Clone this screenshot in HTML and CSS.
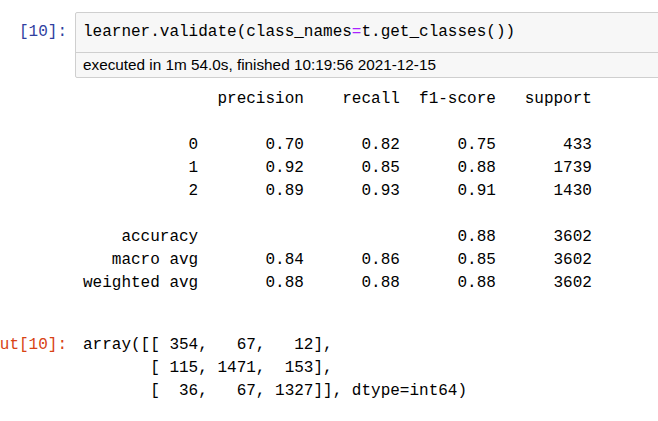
FILE: index.html
```html
<!DOCTYPE html>
<html>
<head>
<meta charset="utf-8">
<link rel="stylesheet" href="styles.css">
</head>
<body>
<div class="notebook">
  <div class="cell">
    <div class="input-row">
      <div class="prompt in-prompt">[10]:</div>
      <div class="input-box">
        <pre class="code">learner.validate(class_names<span class="op">=</span>t.get_classes())</pre>
        <div class="exec">executed in 1m 54.0s, finished 10:19:56 2021-12-15</div>
      </div>
    </div>
    <div class="output-row stream">
      <div class="prompt"></div>
      <pre class="out">              precision    recall  f1-score   support

           0       0.70      0.82      0.75       433
           1       0.92      0.85      0.88      1739
           2       0.89      0.93      0.91      1430

    accuracy                           0.88      3602
   macro avg       0.84      0.86      0.85      3602
weighted avg       0.88      0.88      0.88      3602</pre>
    </div>
    <div class="output-row result">
      <div class="prompt out-prompt">Out[10]:</div>
      <pre class="out">array([[ 354,   67,   12],
       [ 115, 1471,  153],
       [  36,   67, 1327]], dtype=int64)</pre>
    </div>
  </div>
</div>
</body>
</html>
```

FILE: styles.css
```css
html, body {
  margin: 0;
  padding: 0;
  background: #ffffff;
}

body {
  font-family: "Liberation Mono", monospace;
  font-size: 16px;
  color: #000000;
  overflow: hidden;
}

.notebook {
  padding-top: 12px;
  width: 700px;
}

.input-row,
.output-row {
  display: flex;
  align-items: flex-start;
}

.prompt {
  flex: 0 0 75px;
  width: 75px;
  box-sizing: border-box;
  padding-right: 8px;
  display: flex;
  justify-content: flex-end;
  white-space: nowrap;
  line-height: 23px;
  font-family: "Liberation Mono", monospace;
  font-size: 16px;
}

.in-prompt {
  color: #303f9f;
  padding-top: 9px;
}

.out-prompt {
  color: #d84315;
}

.input-box {
  flex: 1 1 auto;
  border: 1px solid #cfcfcf;
  border-radius: 2px;
  background: #f7f7f7;
}

.code {
  margin: 0;
  padding: 8px 7px;
  font-family: "Liberation Mono", monospace;
  font-size: 16px;
  line-height: 23px;
  color: #000000;
}

.op {
  color: #aa22ff;
}

.exec {
  border-top: 1px solid #cfcfcf;
  padding: 4px 7px;
  font-family: "Liberation Sans", Arial, sans-serif;
  font-size: 15.3px;
  line-height: 16px;
  color: #000000;
}

.out {
  margin: 0;
  padding-left: 8px;
  font-family: "Liberation Mono", monospace;
  font-size: 16px;
  line-height: 23px;
  color: #000000;
}

.stream {
  margin-top: 10px;
}

.result {
  margin-top: 39px;
}
```
